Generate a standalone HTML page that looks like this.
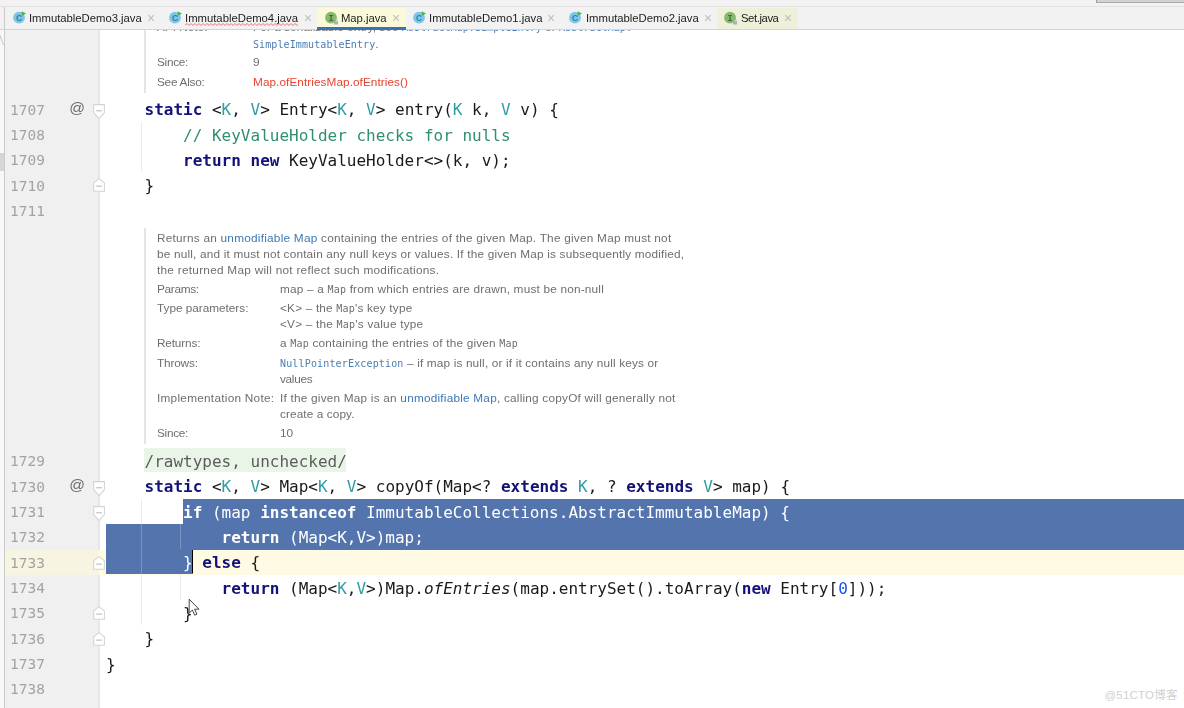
<!DOCTYPE html><html><head><meta charset="utf-8"><title>Map.java</title><style>
*{box-sizing:border-box;margin:0;padding:0}
html,body{width:1184px;height:708px;overflow:hidden;background:#fff}
body{position:relative;font-family:"Liberation Sans", "Noto Sans CJK SC", sans-serif;color:#000}
.abs{position:absolute}
.code,.ln,.doc,.tabt,.tabx{will-change:transform}
#topstrip{left:0;top:0;width:1184px;height:6.5px;background:#f2f2f2;border-bottom:1.7px solid #e2e2e2}
#topbar{left:1096px;top:0;width:88px;height:2.6px;background:#d2d2d2;border-bottom:1px solid #ababab;border-left:1px solid #9a9a9a}
#tabbar{left:0;top:6.5px;width:1184px;height:23.3px;background:#f2f2f2;border-bottom:1px solid #d4d4d4}
#leftstrip{left:0;top:30px;width:4px;height:678px;background:#f8f8f8}
#leftline{left:4px;top:7px;width:1px;height:701px;background:#cbcbcb}
#gutter{left:5px;top:30px;width:95px;height:678px;background:#f0f0f0;border-right:2px solid #e6e6e6}
.ln{position:absolute;left:10px;font-family:"DejaVu Sans Mono", "Liberation Mono", monospace;font-size:14.5px;color:#a3a3a3;line-height:25px;height:25px;white-space:pre}
.code{position:absolute;left:106px;font-family:"DejaVu Sans Mono", "Liberation Mono", monospace;font-size:16px;color:#1a1a1a;line-height:25px;height:25px;white-space:pre;letter-spacing:0}
.k{color:#12127a;font-weight:bold}
.tp{color:#2f9da4}
.cm{color:#2f9070}
.it{font-style:italic}
.doc{position:absolute;font-size:11.8px;color:#6e6e6e;white-space:nowrap;line-height:16px;height:16px}
.doc a{color:#3b78b5;text-decoration:none}
.doc code{font-family:"DejaVu Sans Mono", "Liberation Mono", monospace;font-size:10px}
.red{color:#e8432e}
.tabt{position:absolute;top:10.4px;height:16px;line-height:16px;font-size:11.3px;color:#1c1c1c;white-space:nowrap}
.tabx{position:absolute;top:10.3px;width:10px;height:16px;line-height:16px;font-size:14px;color:#bdbdbd;text-align:center}
.doc .lk{color:#4a7db5}
.w{color:#fff}
.w b{font-weight:bold}
.fold{color:#5c5c5c}
.sel{position:absolute;background:#5474ad}
.guide{position:absolute;width:1px;background:#ececec}
.g2{background:#7b93c1}
.docbar{position:absolute;left:144.2px;width:1.7px;background:#e4e4e4}
</style></head><body>
<div id="leftstrip" class="abs"></div><div id="gutter" class="abs"></div>
<div class="abs" style="left:5px;top:549.7px;width:94px;height:25.3px;background:#f8f4e2"></div>
<div class="abs" style="left:99px;top:549.7px;width:1085px;height:25.3px;background:#fffae3"></div>
<div class="sel" style="left:183px;top:498.7px;width:1001px;height:26px"></div>
<div class="sel" style="left:105.6px;top:524.3px;width:1079px;height:25.5px"></div>
<div class="sel" style="left:105.6px;top:549.5px;width:87px;height:24.7px"></div>
<div class="abs" style="left:144.2px;top:448px;width:202px;height:24px;background:#e9f5e7"></div>
<div class="guide" style="left:141px;top:122px;height:50px"></div>
<div class="guide" style="left:141px;top:499px;height:25px"></div>
<div class="guide g2" style="left:141px;top:524.3px;height:49.9px"></div>
<div class="guide" style="left:141px;top:574.2px;height:50.8px"></div>
<div class="guide g2" style="left:179.5px;top:524.3px;height:25.2px"></div>
<div class="guide" style="left:179.5px;top:574.2px;height:25.8px"></div>
<div class="abs" style="left:191.6px;top:550.3px;width:1.7px;height:22.7px;background:#000"></div>
<div class="docbar" style="top:30px;height:63px"></div>
<div class="docbar" style="top:228px;height:215.6px"></div>
<div class="ln" style="top:97.60px">1707</div>
<div class="code" style="top:97.20px">    <span class="k">static</span> &lt;<span class="tp">K</span>, <span class="tp">V</span>&gt; Entry&lt;<span class="tp">K</span>, <span class="tp">V</span>&gt; entry(<span class="tp">K</span> k, <span class="tp">V</span> v) {</div>
<div class="ln" style="top:122.94px">1708</div>
<div class="code" style="top:122.54px">        <span class="cm">// KeyValueHolder checks for nulls</span></div>
<div class="ln" style="top:148.28px">1709</div>
<div class="code" style="top:147.88px">        <span class="k">return new</span> KeyValueHolder&lt;&gt;(k, v);</div>
<div class="ln" style="top:173.62px">1710</div>
<div class="code" style="top:173.22px">    }</div>
<div class="ln" style="top:198.96px">1711</div>
<div class="ln" style="top:449.40px">1729</div>
<div class="code" style="top:449.00px">    <span class="fold">/rawtypes, unchecked/</span></div>
<div class="ln" style="top:474.74px">1730</div>
<div class="code" style="top:474.34px">    <span class="k">static</span> &lt;<span class="tp">K</span>, <span class="tp">V</span>&gt; Map&lt;<span class="tp">K</span>, <span class="tp">V</span>&gt; copyOf(Map&lt;? <span class="k">extends</span> <span class="tp">K</span>, ? <span class="k">extends</span> <span class="tp">V</span>&gt; map) {</div>
<div class="ln" style="top:500.08px">1731</div>
<div class="code" style="top:499.68px">        <span class="w"><b>if</b> (map <b>instanceof</b> ImmutableCollections.AbstractImmutableMap) {</span></div>
<div class="ln" style="top:525.42px">1732</div>
<div class="code" style="top:525.02px">            <span class="w"><b>return</b> (Map&lt;K,V&gt;)map;</span></div>
<div class="ln" style="top:550.76px">1733</div>
<div class="code" style="top:550.36px">        <span class="w">}</span> <span class="k">else</span> {</div>
<div class="ln" style="top:576.10px">1734</div>
<div class="code" style="top:575.70px">            <span class="k">return</span> (Map&lt;<span class="tp">K</span>,<span class="tp">V</span>&gt;)Map.<span class="it">ofEntries</span>(map.entrySet().toArray(<span class="k">new</span> Entry[<span style="color:#1750eb">0</span>]));</div>
<div class="ln" style="top:601.44px">1735</div>
<div class="code" style="top:601.04px">        }</div>
<div class="ln" style="top:626.78px">1736</div>
<div class="code" style="top:626.38px">    }</div>
<div class="ln" style="top:652.12px">1737</div>
<div class="code" style="top:651.72px">}</div>
<div class="ln" style="top:677.46px">1738</div>
<div class="abs" style="left:67px;top:98.10px;width:20px;height:20px;line-height:20px;text-align:center;font-family:'Liberation Sans',sans-serif;font-size:15.5px;will-change:transform;color:#6c6c6c">@</div>
<div class="abs" style="left:67px;top:475.24px;width:20px;height:20px;line-height:20px;text-align:center;font-family:'Liberation Sans',sans-serif;font-size:15.5px;will-change:transform;color:#6c6c6c">@</div>
<svg class="abs" style="left:92px;top:103.60px" width="14" height="16" viewBox="0 0 14 16"><path d="M1.7 0.6 H12.4 V8.6 L7.05 14.6 L1.7 8.6 Z" fill="#fff" stroke="#d4d4d4" stroke-width="1.1" stroke-linejoin="round"/><path d="M4.2 6.8 H9.9" stroke="#b4b4b4" stroke-width="1"/></svg>
<svg class="abs" style="left:92px;top:480.74px" width="14" height="16" viewBox="0 0 14 16"><path d="M1.7 0.6 H12.4 V8.6 L7.05 14.6 L1.7 8.6 Z" fill="#fff" stroke="#d4d4d4" stroke-width="1.1" stroke-linejoin="round"/><path d="M4.2 6.8 H9.9" stroke="#b4b4b4" stroke-width="1"/></svg>
<svg class="abs" style="left:92px;top:506.08px" width="14" height="16" viewBox="0 0 14 16"><path d="M1.7 0.6 H12.4 V8.6 L7.05 14.6 L1.7 8.6 Z" fill="#fff" stroke="#d4d4d4" stroke-width="1.1" stroke-linejoin="round"/><path d="M4.2 6.8 H9.9" stroke="#b4b4b4" stroke-width="1"/></svg>
<svg class="abs" style="left:92px;top:178.42px" width="14" height="16" viewBox="0 0 14 16"><path d="M1.7 13.3 H12.4 V4.9 L7.05 0.6 L1.7 4.9 Z" fill="#fff" stroke="#d4d4d4" stroke-width="1.1" stroke-linejoin="round"/><path d="M4.2 8.1 H9.9" stroke="#b4b4b4" stroke-width="1"/></svg>
<svg class="abs" style="left:92px;top:555.56px" width="14" height="16" viewBox="0 0 14 16"><path d="M1.7 13.3 H12.4 V4.9 L7.05 0.6 L1.7 4.9 Z" fill="#fff" stroke="#d4d4d4" stroke-width="1.1" stroke-linejoin="round"/><path d="M4.2 8.1 H9.9" stroke="#b4b4b4" stroke-width="1"/></svg>
<svg class="abs" style="left:92px;top:606.24px" width="14" height="16" viewBox="0 0 14 16"><path d="M1.7 13.3 H12.4 V4.9 L7.05 0.6 L1.7 4.9 Z" fill="#fff" stroke="#d4d4d4" stroke-width="1.1" stroke-linejoin="round"/><path d="M4.2 8.1 H9.9" stroke="#b4b4b4" stroke-width="1"/></svg>
<svg class="abs" style="left:92px;top:631.58px" width="14" height="16" viewBox="0 0 14 16"><path d="M1.7 13.3 H12.4 V4.9 L7.05 0.6 L1.7 4.9 Z" fill="#fff" stroke="#d4d4d4" stroke-width="1.1" stroke-linejoin="round"/><path d="M4.2 8.1 H9.9" stroke="#b4b4b4" stroke-width="1"/></svg>
<div class="abs" style="left:0;top:153px;width:4px;height:18px;background:#d6d6d6"></div>
<svg class="abs" style="left:188px;top:597.5px" width="14" height="20" viewBox="0 0 14 20"><path d="M1.2 1.2 V15 L4.4 12 L6.7 17.2 L8.9 16.2 L6.6 11.2 H11 Z" fill="#fff" stroke="#333" stroke-width="0.9" stroke-linejoin="miter"/></svg>
<div class="abs" style="left:1104.5px;top:687px;letter-spacing:0.2px;font-size:11.5px;line-height:16px;color:#d0d0d0;white-space:nowrap;font-family:'Liberation Sans','Noto Sans CJK SC',sans-serif" id="wm">@51CTO博客</div>
<div class="doc" id="d0" style="left:157px;top:19.3px;letter-spacing:0.0000px;">API Note:</div>
<div class="doc" id="d1" style="left:253px;top:19.3px;letter-spacing:0.0566px;">For a serializable entry, see <code class="lk">AbstractMap.SimpleEntry</code> or <code class="lk">AbstractMap.</code></div>
<div class="doc" id="d2" style="left:253px;top:36.3px;letter-spacing:0.0951px;"><code class="lk">SimpleImmutableEntry</code>.</div>
<div class="doc" id="d3" style="left:157px;top:54.3px;letter-spacing:-0.2995px;">Since:</div>
<div class="doc" id="d4" style="left:253px;top:54.3px;letter-spacing:0.0000px;">9</div>
<div class="doc" id="d5" style="left:157px;top:74.3px;letter-spacing:-0.2493px;">See Also:</div>
<div class="doc" id="d6" style="left:253px;top:74.3px;letter-spacing:0.0564px;"><span class="red">Map.ofEntriesMap.ofEntries()</span></div>
<div class="doc" id="d7" style="left:157px;top:230.3px;letter-spacing:0.2359px;">Returns an <a>unmodifiable Map</a> containing the entries of the given Map. The given Map must not</div>
<div class="doc" id="d8" style="left:157px;top:246.3px;letter-spacing:0.1842px;">be null, and it must not contain any null keys or values. If the given Map is subsequently modified,</div>
<div class="doc" id="d9" style="left:157px;top:262.3px;letter-spacing:0.2663px;">the returned Map will not reflect such modifications.</div>
<div class="doc" id="d10" style="left:157px;top:281.3px;letter-spacing:-0.3031px;">Params:</div>
<div class="doc" id="d11" style="left:280px;top:281.3px;letter-spacing:0.1985px;">map &ndash; a <code>Map</code> from which entries are drawn, must be non-null</div>
<div class="doc" id="d12" style="left:157px;top:300.3px;letter-spacing:-0.0248px;">Type parameters:</div>
<div class="doc" id="d13" style="left:280px;top:300.3px;letter-spacing:0.1879px;">&lt;K&gt; &ndash; the <code>Map</code>'s key type</div>
<div class="doc" id="d14" style="left:280px;top:316.3px;letter-spacing:0.2141px;">&lt;V&gt; &ndash; the <code>Map</code>'s value type</div>
<div class="doc" id="d15" style="left:157px;top:335.3px;letter-spacing:-0.1617px;">Returns:</div>
<div class="doc" id="d16" style="left:280px;top:335.3px;letter-spacing:0.2010px;">a <code>Map</code> containing the entries of the given <code>Map</code></div>
<div class="doc" id="d17" style="left:157px;top:355.3px;letter-spacing:-0.1647px;">Throws:</div>
<div class="doc" id="d18" style="left:280px;top:355.3px;letter-spacing:0.1568px;"><code class="lk">NullPointerException</code> &ndash; if map is null, or if it contains any null keys or</div>
<div class="doc" id="d19" style="left:280px;top:371.3px;letter-spacing:-0.3016px;">values</div>
<div class="doc" id="d20" style="left:157px;top:390.3px;letter-spacing:0.2580px;">Implementation Note:</div>
<div class="doc" id="d21" style="left:280px;top:390.3px;letter-spacing:0.2150px;">If the given Map is an <a>unmodifiable Map</a>, calling copyOf will generally not</div>
<div class="doc" id="d22" style="left:280px;top:406.3px;letter-spacing:0.0975px;">create a copy.</div>
<div class="doc" id="d23" style="left:157px;top:425.3px;letter-spacing:-0.2828px;">Since:</div>
<div class="doc" id="d24" style="left:280px;top:425.3px;letter-spacing:0.0000px;">10</div>
<div class="abs" id="topstrip"></div><div class="abs" id="topbar"></div><div class="abs" id="tabbar"></div>
<div class="abs" id="leftline"></div><svg class="abs" style="left:0;top:32px" width="4" height="16" viewBox="0 0 4 16"><path d="M-1 1 L3.6 13" stroke="#c4c4c4" stroke-width="1" fill="none"/></svg>
<svg class="abs" style="left:12px;top:10px" width="16" height="16" viewBox="0 0 16 16"><circle cx="7" cy="7.7" r="5.9" fill="#7dc6e6"/><text x="7" y="10.6" text-anchor="middle" font-family="Liberation Sans, sans-serif" font-size="8.5" font-weight="bold" fill="#2b7fae">C</text><path d="M9.6 1.2 L14 3.6 L9.9 6 Z" fill="#52b04e"/></svg>
<div class="tabt" id="tab0" style="left:29.3px;letter-spacing:-0.017px">ImmutableDemo3.java</div>
<div class="tabx" style="left:145.5px">×</div>
<svg class="abs" style="left:168px;top:10px" width="16" height="16" viewBox="0 0 16 16"><circle cx="7" cy="7.7" r="5.9" fill="#7dc6e6"/><text x="7" y="10.6" text-anchor="middle" font-family="Liberation Sans, sans-serif" font-size="8.5" font-weight="bold" fill="#2b7fae">C</text><path d="M9.6 1.2 L14 3.6 L9.9 6 Z" fill="#52b04e"/></svg>
<div class="tabt" id="tab1" style="left:185px;letter-spacing:-0.002px">ImmutableDemo4.java</div>
<svg class="abs" style="left:185px;top:23.1px" width="113" height="4" viewBox="0 0 113 4"><path d="M0 2 L2 0.5 L4 2.5 L6 0.5 L8 2.5 L10 0.5 L12 2.5 L14 0.5 L16 2.5 L18 0.5 L20 2.5 L22 0.5 L24 2.5 L26 0.5 L28 2.5 L30 0.5 L32 2.5 L34 0.5 L36 2.5 L38 0.5 L40 2.5 L42 0.5 L44 2.5 L46 0.5 L48 2.5 L50 0.5 L52 2.5 L54 0.5 L56 2.5 L58 0.5 L60 2.5 L62 0.5 L64 2.5 L66 0.5 L68 2.5 L70 0.5 L72 2.5 L74 0.5 L76 2.5 L78 0.5 L80 2.5 L82 0.5 L84 2.5 L86 0.5 L88 2.5 L90 0.5 L92 2.5 L94 0.5 L96 2.5 L98 0.5 L100 2.5 L102 0.5 L104 2.5 L106 0.5 L108 2.5 L110 0.5 L112 2.5 L114 0.5" fill="none" stroke="#e46a6a" stroke-width="0.9"/></svg>
<div class="tabx" style="left:302.6px">×</div>
<div class="abs" style="left:316.7px;top:7.5px;width:89.3px;height:21px;background:#fafadb"></div>
<div class="abs" style="left:316.7px;top:27px;width:89.3px;height:3px;background:#3e70b2"></div>
<svg class="abs" style="left:324px;top:10px" width="16" height="16" viewBox="0 0 16 16"><circle cx="7" cy="7.7" r="5.9" fill="#86b96f"/><text x="7" y="10.6" text-anchor="middle" font-family="Liberation Mono, monospace" font-size="8.5" font-weight="bold" fill="#3f6b33">I</text><rect x="9.9" y="11.2" width="4.2" height="3.3" rx="0.6" fill="#a3b4b8"/><path d="M10.9 11.3 V10.4 a1.1 1.1 0 0 1 2.2 0 V11.3" fill="none" stroke="#a3b4b8" stroke-width="0.8"/></svg>
<div class="tabt" id="tab2" style="left:340.5px;letter-spacing:-0.043px">Map.java</div>
<div class="tabx" style="left:390.6px">×</div>
<svg class="abs" style="left:412px;top:10px" width="16" height="16" viewBox="0 0 16 16"><circle cx="7" cy="7.7" r="5.9" fill="#7dc6e6"/><text x="7" y="10.6" text-anchor="middle" font-family="Liberation Sans, sans-serif" font-size="8.5" font-weight="bold" fill="#2b7fae">C</text><path d="M9.6 1.2 L14 3.6 L9.9 6 Z" fill="#52b04e"/></svg>
<div class="tabt" id="tab3" style="left:429px;letter-spacing:0.025px">ImmutableDemo1.java</div>
<div class="tabx" style="left:546.3px">×</div>
<svg class="abs" style="left:568.3px;top:10px" width="16" height="16" viewBox="0 0 16 16"><circle cx="7" cy="7.7" r="5.9" fill="#7dc6e6"/><text x="7" y="10.6" text-anchor="middle" font-family="Liberation Sans, sans-serif" font-size="8.5" font-weight="bold" fill="#2b7fae">C</text><path d="M9.6 1.2 L14 3.6 L9.9 6 Z" fill="#52b04e"/></svg>
<div class="tabt" id="tab4" style="left:585.5px;letter-spacing:-0.017px">ImmutableDemo2.java</div>
<div class="tabx" style="left:702.6px">×</div>
<div class="abs" style="left:717px;top:7.5px;width:81px;height:21px;background:#eef0da"></div>
<svg class="abs" style="left:723.4px;top:10px" width="16" height="16" viewBox="0 0 16 16"><circle cx="7" cy="7.7" r="5.9" fill="#86b96f"/><text x="7" y="10.6" text-anchor="middle" font-family="Liberation Mono, monospace" font-size="8.5" font-weight="bold" fill="#3f6b33">I</text><rect x="9.9" y="11.2" width="4.2" height="3.3" rx="0.6" fill="#a3b4b8"/><path d="M10.9 11.3 V10.4 a1.1 1.1 0 0 1 2.2 0 V11.3" fill="none" stroke="#a3b4b8" stroke-width="0.8"/></svg>
<div class="tabt" id="tab5" style="left:741.3px;letter-spacing:-0.416px">Set.java</div>
<div class="tabx" style="left:783px">×</div>
</body></html>
